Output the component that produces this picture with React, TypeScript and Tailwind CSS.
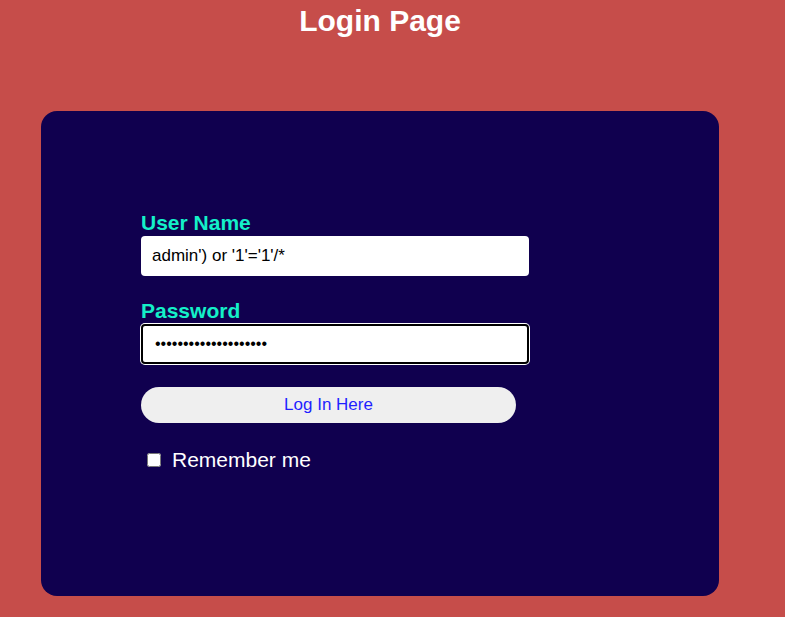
export default function App() {
  return (
    <div className="min-h-[617px] bg-[#c64d4a] pt-[4px] pb-[21px] font-['Liberation_Sans',Arial,sans-serif]">
      <h1 className="w-[760px] text-center text-[30px] font-bold leading-[34px] text-white">Login Page</h1>

      <div className="ml-[41px] mt-[73px] h-[485px] w-[678px] rounded-[16px] bg-[#10004f] pl-[100px] pt-[100px]">
        <form className="flex flex-col">
          <label className="pb-[2px] text-[21px] font-bold leading-[23px] text-[#14f0c8]">User Name</label>
          <input
            readOnly
            value="admin') or '1'='1'/*"
            className="h-[40px] w-[388px] rounded-[4px] bg-white px-[11px] text-[17px] text-black outline-none"
          />

          <label className="mt-[23px] pb-[2px] text-[21px] font-bold leading-[23px] text-[#14f0c8]">Password</label>
          <input
            readOnly
            type="password"
            value="12345678901234567890"
            className="h-[40px] w-[388px] rounded-[4px] border-2 border-black bg-white pl-[12px] pr-[9px] text-[16px] text-black outline-none ring-1 ring-white"
          />

          <button
            type="button"
            className="mt-[23px] h-[36px] w-[375px] rounded-full bg-[#efefef] text-[17px] text-[#1f1fff]"
          >
            Log In Here
          </button>

          <div className="mt-[25px] flex items-center">
            <input type="checkbox" className="ml-[6px] h-[14px] w-[14px]" />
            <span className="ml-[11px] text-[21px] leading-[24px] text-white">Remember me</span>
          </div>
        </form>
      </div>
    </div>
  );
}
